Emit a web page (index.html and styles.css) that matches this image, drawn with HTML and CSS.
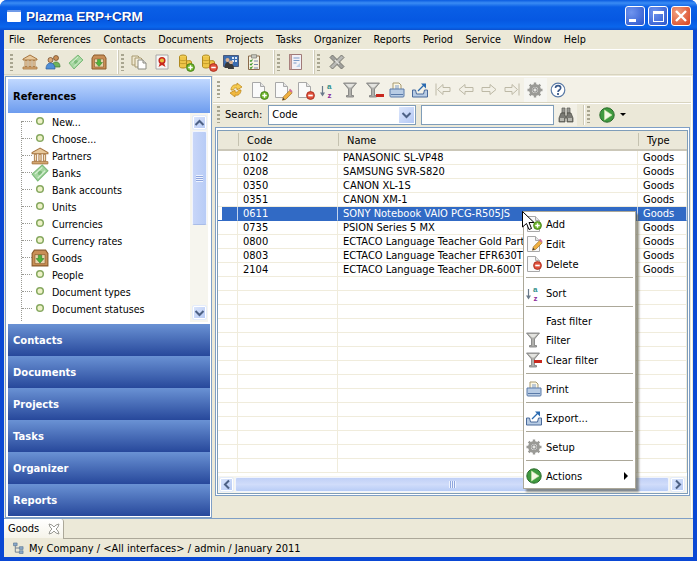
FILE: index.html
```html
<!DOCTYPE html>
<html lang="en">
<head>
    <meta charset="UTF-8">
    <title>Plazma ERP+CRM</title>
    <link rel="stylesheet" href="styles.css">
</head>
<body>
<svg class="defs" width="0" height="0">
    <symbol id="bullet" viewBox="0 0 16 16"><circle cx="8" cy="8" r="3.300" fill="#eef2c8" stroke="#86a860" stroke-width="1.500"/></symbol>
    <symbol id="bank" viewBox="0 0 16 16"><path d="M8 1 1 5v1h14V5z" fill="#e8c89a" stroke="#a5743f"/><path d="M3 6.500h2v6H3zM7 6.500h2v6H7zM11 6.500h2v6h-2z" fill="#f3dfc0" stroke="#a5743f" stroke-width=".8"/><path d="M1 13h14v2H1z" fill="#d9ad78" stroke="#a5743f" stroke-width=".8"/></symbol>
    <symbol id="people" viewBox="0 0 16 16"><circle cx="11" cy="4" r="2.500" fill="#c98f56" stroke="#6b4423" stroke-width=".7"/><path d="M7 13c0-4 2-5 4-5s4 1 4 5z" fill="#6fb35a" stroke="#3f7a33" stroke-width=".7"/><circle cx="5.500" cy="6" r="2.500" fill="#dba877" stroke="#6b4423" stroke-width=".7"/><path d="M1 15c0-4 2-6 4.500-6S10 11 10 15z" fill="#4f8fd6" stroke="#2d5c9c" stroke-width=".7"/></symbol>
    <symbol id="money" viewBox="0 0 16 16"><path d="M1 9 10 1l5 5-9 9z" fill="#a5d6a0" stroke="#7dbb7a"/><circle cx="8" cy="8" r="2" fill="#7dbb7a"/><path d="M3.500 9 10 3M6 12.500 12.500 6" stroke="#d8f0d4" fill="none"/></symbol>
    <symbol id="goods" viewBox="0 0 16 16"><path d="M3 1h10l2 3v11H1V4z" fill="#c98f56" stroke="#8a5a2b"/><path d="M3.500 5h9v8h-9z" fill="#e8d5b0" stroke="#8a5a2b" stroke-width=".6"/><path d="M6.500 5.500h3v3h2L8 12.500 4.500 8.500h2z" fill="#4fb33a" stroke="#2f7a22" stroke-width=".5"/></symbol>
    <symbol id="copies" viewBox="0 0 16 16"><path d="M1 2h6l1 1v8H1z" fill="#efe8d0" stroke="#a89a70"/><path d="M4 4h6l1 1v8H4z" fill="#f5efdc" stroke="#a89a70"/><path d="M7 6h5l3 3v6H7z" fill="#fff" stroke="#8a8a80"/><path d="M12 6v3h3" fill="#ddd" stroke="#8a8a80"/></symbol>
    <symbol id="certificate" viewBox="0 0 16 16"><path d="M2 1h12v14H2z" fill="#f6f6f4" stroke="#a8a8a8"/><circle cx="8" cy="6.500" r="2.800" fill="#e8c040" stroke="#c8281e" stroke-width="1.500"/><path d="M6 9 4.500 13 8 11l3.500 2L10 9z" fill="#c8281e"/></symbol>
    <symbol id="coins" viewBox="0 0 16 16"><ellipse cx="6" cy="2.500" rx="3.500" ry="1.500" fill="#f6d860" stroke="#b08a20"/><path d="M2.500 2.500v10c0 2 7 2 7 0v-10" fill="#eec548" stroke="#b08a20"/><path d="M2.500 5.500c0 1.500 7 1.500 7 0M2.500 8.500c0 1.500 7 1.500 7 0" fill="none" stroke="#b08a20" stroke-width=".7"/><path d="M9.500 7c3-1 5 0 5 1v3H9.500z" fill="#eec548" stroke="#b08a20"/></symbol>
    <symbol id="plus" viewBox="0 0 16 16"><circle cx="8" cy="8" r="7" fill="#6fb52c" stroke="#3f7a14" stroke-width="1.500"/><path d="M8 4v8M4 8h8" stroke="#fff" stroke-width="2.500"/></symbol>
    <symbol id="minus" viewBox="0 0 16 16"><circle cx="8" cy="8" r="7" fill="#e0503a" stroke="#a52a1a" stroke-width="1.500"/><path d="M4 8h8" stroke="#fff" stroke-width="3"/></symbol>
    <symbol id="board" viewBox="0 0 16 16"><path d="M.5 1.500h15v11H.5z" fill="#3b6db0" stroke="#4a5a7a"/><path d="M9 3h2v2H9zM12 3h2v2h-2zM9 6h2v2H9zM12 6h2v2h-2z" fill="#dce8f6"/><circle cx="4.500" cy="6" r="2" fill="#d9b090"/><circle cx="8" cy="8.500" r="2" fill="#d9b090"/><path d="M1.500 14c0-4 1.500-6 3-6s3 2 3 6zM5 15c0-4 1.500-5 3-5s3 1 3 5z" fill="#3a3a3a"/></symbol>
    <symbol id="clipboard" viewBox="0 0 16 16"><path d="M2.500 2h11v13.500h-11z" fill="#f6f2e4" stroke="#8a6a4a"/><path d="M5.500 .7h5V4h-5z" fill="#c8c8c0" stroke="#7a7a70" stroke-width=".7"/><path d="M4 6.500l1 1 1.500-2M4 10l1 1 1.500-2M4 13.500l1 1 1.500-2" fill="none" stroke="#3f9a2a" stroke-width="1.100"/><path d="M8 7h4M8 10.500h4M8 14h4" stroke="#7a8aa8"/></symbol>
    <symbol id="notebook" viewBox="0 0 16 16"><path d="M2.500 .5h12v15h-12z" fill="#f2f0f6" stroke="#a07a78"/><path d="M2.500 .5h2v15h-2z" fill="#d8a8a0" stroke="#a07a78" stroke-width=".7"/><path d="M6.500 4h6M6.500 6.500h6M6.500 9h3" stroke="#7a9ac8"/><path d="M9 13l4-4v4z" fill="#bcd0e8"/></symbol>
    <symbol id="tools" viewBox="0 0 16 16"><path d="M1 3.500 3.500 1l11.500 11.500-2.500 2.500z" fill="#a0a09c" stroke="#76766f"/><path d="M15 3.500 12.500 1 1 12.500 3.500 15z" fill="#b8b8b4" stroke="#76766f"/><path d="M6 6l4 4" stroke="#e0e0dc" stroke-width="1.500"/></symbol>
    <symbol id="refresh" viewBox="0 0 16 16"><path d="M3 8c0-4 3-6 6-5V1l5 4-5 3V6C7 5.500 5.500 6.500 5 8z" fill="#f6cc50" stroke="#c08a20" stroke-width=".8"/><path d="M13 8c0 4-3 6-6 5v2l-5-4 5-3v2c2 .5 3.500-.5 4-2z" fill="#f0b840" stroke="#c08a20" stroke-width=".8"/></symbol>
    <symbol id="doc" viewBox="0 0 16 16"><path d="M1.500 .5h8l4 4v11h-12z" fill="#fafafa" stroke="#a8a8a8"/><path d="M9.500 .5v4h4" fill="#e4e4e4" stroke="#a8a8a8"/></symbol>
    <symbol id="pencil" viewBox="0 0 16 16"><path d="M3 15l1-4 8-8 3 3-8 8z" fill="#f0b040" stroke="#9a6a20" stroke-width=".8"/><path d="M11 2.500l1.500-1.500 3 3L14 5.500z" fill="#d06a9a"/><path d="M3 15l1-3 2 2z" fill="#444"/></symbol>
    <symbol id="filter" viewBox="0 0 16 16"><path d="M.5 1h13L8.500 7v6.500h2V15h-7v-1.500h2V7z" fill="#b0b0ac" stroke="#7a7a78" stroke-width=".8"/><path d="M2.500 2h9L8 5.500H6z" fill="#e4e4e0"/></symbol>
    <symbol id="print" viewBox="0 0 16 16"><path d="M4 1h6l2 2v6H4z" fill="#fdf8e4" stroke="#a89a70"/><path d="M6 4h4M6 6h4" stroke="#7a9ac8"/><path d="M1 7h14v7a1 1 0 0 1-1 1H2a1 1 0 0 1-1-1z" fill="#b8cce4" stroke="#5a7aa8"/><path d="M2 12.500h12" stroke="#5a7aa8"/></symbol>
    <symbol id="export" viewBox="0 0 16 16"><path d="M.5 8h3l1 4h7l1-4h3v7H.5z" fill="#b8cce4" stroke="#4a6a9a"/><path d="M6 9l6-6" stroke="#2a6ab0" stroke-width="1.300"/><path d="M9 1.500h5v5z" fill="#2a6ab0"/></symbol>
    <symbol id="first" viewBox="0 0 16 16"><path d="M1 1.500v12" stroke="#bdb9a6" fill="none"/><path d="M2.500 7.500 8 2.500v3h7v4H8v3z" fill="#f2f0e6" stroke="#bdb9a6"/></symbol>
    <symbol id="prev" viewBox="0 0 16 16"><path d="M1 7.500 7 2.500v3h8v4H7v3z" fill="#f2f0e6" stroke="#bdb9a6"/></symbol>
    <symbol id="next" viewBox="0 0 16 16"><path d="M15 7.500 9 2.500v3H1v4h8v3z" fill="#f2f0e6" stroke="#bdb9a6"/></symbol>
    <symbol id="last" viewBox="0 0 16 16"><path d="M15 1.500v12" stroke="#bdb9a6" fill="none"/><path d="M13.500 7.500 8 2.500v3H1v4h7v3z" fill="#f2f0e6" stroke="#bdb9a6"/></symbol>
    <symbol id="gear" viewBox="0 0 16 16"><path d="M8 3.500a4.500 4.500 0 1 0 0 9 4.500 4.500 0 0 0 0-9z" fill="none" stroke="#9a9a96" stroke-width="3"/><path d="M8 .5v15M.5 8h15M2.700 2.700l10.600 10.600M13.300 2.700 2.700 13.300" stroke="#9a9a96" stroke-width="2.400" stroke-dasharray="3 9 3"/><circle cx="8" cy="8" r="2.200" fill="#e4e4e0" stroke="#7a7a7a"/></symbol>
    <symbol id="help" viewBox="0 0 16 16"><circle cx="8" cy="8" r="6.800" fill="#fff" stroke="#5a7aa6" stroke-width="1.200"/><path d="M5.500 6c0-3.200 5.200-3.200 5.200 0 0 2-2.700 2-2.700 4" fill="none" stroke="#3a5a8a" stroke-width="1.600"/><path d="M7.100 11h1.800v2H7.100z" fill="#3a5a8a"/></symbol>
    <symbol id="binoculars" viewBox="0 0 16 16"><path d="M4 1h3v5H4zM9 1h3v5H9z" fill="#9a9a94" stroke="#5a5a54" stroke-width=".7"/><path d="M3 6h4v3h2V6h4l2 5v4H9v-4H7v4H1v-4z" fill="#7a7a74" stroke="#4a4a44" stroke-width=".7"/><path d="M2 11h4v3H2zM10 11h4v3h-4z" fill="#b8b8b0"/></symbol>
    <symbol id="play" viewBox="0 0 16 16"><circle cx="8" cy="8" r="7.200" fill="#3f9a3f" stroke="#2a6a2a"/><path d="M5.500 3v10L13 8z" fill="#f4f8e4" stroke="#cfe8a8" stroke-width=".6"/></symbol>
    <symbol id="tabclose" viewBox="0 0 12 12"><path d="M1 1l3 1 2 2 2-2 3-1-1 3-2 2 2 2 1 3-3-1-2-2-2 2-3 1 1-3 2-2-2-2z" fill="#fff" stroke="#9a9a94"/></symbol>
    <symbol id="hierarchy" viewBox="0 0 12 12"><path d="M2.500 3v7.500H7M2.500 6H7" fill="none" stroke="#6a7a8a"/><path d="M.5 .5h4v3h-4zM7 4.500h4v3H7zM7 9h4v3H7z" fill="#8aa8c8" stroke="#4a6a8a" stroke-width=".6"/></symbol>
</svg>

<div class="window">
    <div class="titlebar">
        <div class="app-icon"></div>
        <div class="title">Plazma ERP+CRM</div>
        <div class="win-btns">
            <div class="win-btn"><span class="glyph-min"></span></div>
            <div class="win-btn"><span class="glyph-max"></span></div>
            <div class="win-btn close">
                <svg width="14" height="14" viewBox="0 0 14 14"><path d="M2 2l10 10M12 2 2 12" stroke="#fff" stroke-width="2.400"/></svg>
            </div>
        </div>
    </div>

    <div class="client">
        <div class="menubar">
            <span>File</span><span>References</span><span>Contacts</span><span>Documents</span><span>Projects</span><span>Tasks</span><span>Organizer</span><span>Reports</span><span>Period</span><span>Service</span><span>Window</span><span>Help</span>
        </div>

        <div class="main-toolbar">
            <div class="tb-group g1">
                <i class="grip"></i>
                <b class="tb"><svg><use href="#bank"/></svg></b>
                <b class="tb"><svg><use href="#people"/></svg></b>
                <b class="tb"><svg><use href="#money"/></svg></b>
                <b class="tb"><svg><use href="#goods"/></svg></b>
            </div>
            <div class="tb-group g2">
                <i class="grip"></i>
                <b class="tb"><svg><use href="#copies"/></svg></b>
                <b class="tb"><svg><use href="#certificate"/></svg></b>
                <b class="tb stack"><svg><use href="#coins"/></svg><svg class="badge"><use href="#plus"/></svg></b>
                <b class="tb stack"><svg><use href="#coins"/></svg><svg class="badge"><use href="#minus"/></svg></b>
                <b class="tb"><svg><use href="#board"/></svg></b>
                <b class="tb"><svg><use href="#clipboard"/></svg></b>
            </div>
            <div class="tb-group g3">
                <i class="grip"></i>
                <b class="tb"><svg><use href="#notebook"/></svg></b>
            </div>
            <div class="tb-group g4">
                <i class="grip"></i>
                <b class="tb"><svg><use href="#tools"/></svg></b>
            </div>
        </div>

        <div class="workspace">
            <div class="nav-panel">
                <div class="nav-head active">References</div>
                <div class="nav-list">
                    <div class="tree">
                        <div class="tree-row"><i class="hook"></i><svg class="node small"><use href="#bullet"/></svg>New...</div>
                        <div class="tree-row"><i class="hook"></i><svg class="node small"><use href="#bullet"/></svg>Choose...</div>
                        <div class="tree-row"><i class="hook"></i><svg class="node"><use href="#bank"/></svg>Partners</div>
                        <div class="tree-row"><i class="hook"></i><svg class="node"><use href="#money"/></svg>Banks</div>
                        <div class="tree-row"><i class="hook"></i><svg class="node small"><use href="#bullet"/></svg>Bank accounts</div>
                        <div class="tree-row"><i class="hook"></i><svg class="node small"><use href="#bullet"/></svg>Units</div>
                        <div class="tree-row"><i class="hook"></i><svg class="node small"><use href="#bullet"/></svg>Currencies</div>
                        <div class="tree-row"><i class="hook"></i><svg class="node small"><use href="#bullet"/></svg>Currency rates</div>
                        <div class="tree-row"><i class="hook"></i><svg class="node"><use href="#goods"/></svg>Goods</div>
                        <div class="tree-row"><i class="hook"></i><svg class="node small"><use href="#bullet"/></svg>People</div>
                        <div class="tree-row"><i class="hook"></i><svg class="node small"><use href="#bullet"/></svg>Document types</div>
                        <div class="tree-row"><i class="hook"></i><svg class="node small"><use href="#bullet"/></svg>Document statuses</div>
                    </div>
                    <div class="vscroll">
                        <div class="sb-btn"><svg width="11" height="8" viewBox="0 0 11 8"><path d="M1.500 6 5.500 2l4 4" fill="none" stroke="#4d6185" stroke-width="2"/></svg></div>
                        <div class="sb-thumb"><span class="ridges"></span></div>
                        <div class="sb-btn"><svg width="11" height="8" viewBox="0 0 11 8"><path d="M1.500 2l4 4 4-4" fill="none" stroke="#4d6185" stroke-width="2"/></svg></div>
                    </div>
                </div>
                <div class="nav-head gap">Contacts</div>
                <div class="nav-head">Documents</div>
                <div class="nav-head">Projects</div>
                <div class="nav-head">Tasks</div>
                <div class="nav-head">Organizer</div>
                <div class="nav-head">Reports</div>
            </div>

            <div class="content">
                <div class="action-bar">
                    <i class="grip"></i>
                    <b class="ab"><svg><use href="#refresh"/></svg></b>
                    <b class="ab stack"><svg><use href="#doc"/></svg><svg class="badge"><use href="#plus"/></svg></b>
                    <b class="ab stack"><svg><use href="#doc"/></svg><svg class="badge over"><use href="#pencil"/></svg></b>
                    <b class="ab stack"><svg><use href="#doc"/></svg><svg class="badge"><use href="#minus"/></svg></b>
                    <b class="ab"><svg class="sort-ico" viewBox="0 -2 16 20"><path d="M2.500 4v9" stroke="#6a7a8a" stroke-width="1.200"/><path d="M0 10.500l2.500 4 2.500-4z" fill="#6a7a8a"/><text x="7" y="7" class="sort-a">a</text><text x="7.500" y="16" class="sort-z">z</text></svg></b>
                    <b class="ab"><svg><use href="#filter"/></svg></b>
                    <b class="ab stack"><svg><use href="#filter"/></svg><i class="red-dash"></i></b>
                    <b class="ab"><svg><use href="#print"/></svg></b>
                    <b class="ab"><svg><use href="#export"/></svg></b>
                    <b class="ab"><svg><use href="#first"/></svg></b>
                    <b class="ab"><svg><use href="#prev"/></svg></b>
                    <b class="ab"><svg><use href="#next"/></svg></b>
                    <b class="ab"><svg><use href="#last"/></svg></b>
                    <b class="ab hover"><svg><use href="#gear"/></svg></b>
                    <b class="ab"><svg><use href="#help"/></svg></b>
                </div>
                <div class="search-bar">
                    <i class="grip"></i>
                    <span class="search-label">Search:</span>
                    <div class="combo"><span class="combo-text">Code</span><span class="combo-btn"><svg width="11" height="8" viewBox="0 0 11 8"><path d="M1.500 2l4 4 4-4" fill="none" stroke="#4d6185" stroke-width="2"/></svg></span></div>
                    <div class="search-input"></div>
                    <b class="find"><svg><use href="#binoculars"/></svg></b>
                    <i class="divider"></i>
                    <i class="grip"></i>
                    <b class="run"><svg><use href="#play"/></svg></b>
                    <i class="drop-arrow"></i>
                </div>

                <div class="grid-panel">
                    <div class="grid-inner">
                        <div class="grid-view">
                            <table class="grid">
                                <colgroup><col class="c0"><col class="c1"><col class="c2"><col class="c3"></colgroup>
                                <thead><tr><th></th><th>Code</th><th>Name</th><th>Type</th></tr></thead>
                                <tbody>
                                    <tr><td></td><td>0102</td><td>PANASONIC SL-VP48</td><td>Goods</td></tr>
                                    <tr><td></td><td>0208</td><td>SAMSUNG SVR-S820</td><td>Goods</td></tr>
                                    <tr><td></td><td>0350</td><td>CANON XL-1S</td><td>Goods</td></tr>
                                    <tr><td></td><td>0351</td><td>CANON XM-1</td><td>Goods</td></tr>
                                    <tr class="selected"><td></td><td>0611</td><td>SONY Notebook VAIO PCG-R505JS</td><td>Goods</td></tr>
                                    <tr><td></td><td>0735</td><td>PSION Series 5 MX</td><td>Goods</td></tr>
                                    <tr><td></td><td>0800</td><td>ECTACO Language Teacher Gold Partner</td><td>Goods</td></tr>
                                    <tr><td></td><td>0803</td><td>ECTACO Language Teacher EFR630T</td><td>Goods</td></tr>
                                    <tr><td></td><td>2104</td><td>ECTACO Language Teacher DR-600T</td><td>Goods</td></tr>
                                    <tr><td></td><td></td><td></td><td></td></tr>
                                    <tr><td></td><td></td><td></td><td></td></tr>
                                    <tr><td></td><td></td><td></td><td></td></tr>
                                    <tr><td></td><td></td><td></td><td></td></tr>
                                    <tr><td></td><td></td><td></td><td></td></tr>
                                    <tr><td></td><td></td><td></td><td></td></tr>
                                    <tr><td></td><td></td><td></td><td></td></tr>
                                    <tr><td></td><td></td><td></td><td></td></tr>
                                    <tr><td></td><td></td><td></td><td></td></tr>
                                    <tr><td></td><td></td><td></td><td></td></tr>
                                    <tr><td></td><td></td><td></td><td></td></tr>
                                    <tr><td></td><td></td><td></td><td></td></tr>
                                    <tr><td></td><td></td><td></td><td></td></tr>
                                    <tr><td></td><td></td><td></td><td></td></tr>
                                </tbody>
                            </table>
                        </div>
                        <div class="hscroll">
                            <div class="sb-btn"><svg width="8" height="11" viewBox="0 0 8 11"><path d="M6 1.500 2 5.500l4 4" fill="none" stroke="#4d6185" stroke-width="2"/></svg></div>
                            <div class="sb-thumb wide"><span class="ridges upright"></span></div>
                            <div class="sb-btn"><svg width="8" height="11" viewBox="0 0 8 11"><path d="M2 1.500l4 4-4 4" fill="none" stroke="#4d6185" stroke-width="2"/></svg></div>
                        </div>
                    </div>
                </div>
            </div>
        </div>

        <div class="tabbar">
            <div class="tab">Goods<svg class="tab-x"><use href="#tabclose"/></svg></div>
        </div>
        <div class="statusbar">
            <svg class="status-icon"><use href="#hierarchy"/></svg>
            <span>My Company / &lt;All interfaces&gt; / admin / January 2011</span>
        </div>
    </div>

    <!-- popup over the grid -->
    <div class="popup">
        <div class="mi"><span class="mi-ico stack"><svg><use href="#doc"/></svg><svg class="badge"><use href="#plus"/></svg></span>Add</div>
        <div class="mi"><span class="mi-ico stack"><svg><use href="#doc"/></svg><svg class="badge over"><use href="#pencil"/></svg></span>Edit</div>
        <div class="mi"><span class="mi-ico stack"><svg><use href="#doc"/></svg><svg class="badge"><use href="#minus"/></svg></span>Delete</div>
        <div class="sep"></div>
        <div class="mi"><span class="mi-ico"><svg class="sort-ico" viewBox="0 -2 16 20"><path d="M2.500 4v9" stroke="#6a7a8a" stroke-width="1.200"/><path d="M0 10.500l2.500 4 2.500-4z" fill="#6a7a8a"/><text x="7" y="7" class="sort-a">a</text><text x="7.500" y="16" class="sort-z">z</text></svg></span>Sort</div>
        <div class="sep"></div>
        <div class="mi short"><span class="mi-ico"></span>Fast filter</div>
        <div class="mi"><span class="mi-ico"><svg><use href="#filter"/></svg></span>Filter</div>
        <div class="mi"><span class="mi-ico stack"><svg><use href="#filter"/></svg><i class="red-dash"></i></span>Clear filter</div>
        <div class="sep"></div>
        <div class="mi"><span class="mi-ico"><svg><use href="#print"/></svg></span>Print</div>
        <div class="sep"></div>
        <div class="mi"><span class="mi-ico"><svg><use href="#export"/></svg></span>Export...</div>
        <div class="sep"></div>
        <div class="mi"><span class="mi-ico"><svg><use href="#gear"/></svg></span>Setup</div>
        <div class="sep"></div>
        <div class="mi"><span class="mi-ico"><svg><use href="#play"/></svg></span>Actions<i class="sub-arrow"></i></div>
    </div>

    <svg class="cursor" width="14" height="21" viewBox="0 0 14 21"><path d="M.5.500v15.500l4-3.500 2.500 6 2.500-1-2.500-6h5z" fill="#fff" stroke="#000"/></svg>
</div>
</body>
</html>
```

FILE: styles.css
```css
*{
    box-sizing: border-box;
}

body{
    margin: 0;
    background-color: #fff;
    font-family: "DejaVu Sans Condensed", "DejaVu Sans", sans-serif;
    font-size: 11px;
    color: #000;
}

.defs{
    position: absolute;
}

b, i{
    font-weight: normal;
    font-style: normal;
}

.sort-a, .sort-z{
    font-family: "Liberation Sans", sans-serif;
    font-weight: 700;
    font-size: 8px;
}

.sort-a{
    fill: #2f8f8a;
}

.sort-z{
    fill: #8a2a9a;
}

.window{
    position: relative;
    width: 697px;
    height: 561px;
    overflow: hidden;
    display: flex;
    flex-direction: column;
    background-color: #0a48d4;
    border-radius: 7px 7px 0 0;
    padding: 0 4px 4px;
}

/* title bar */
.titlebar{
    height: 30px;
    flex: none;
    margin: 0 -4px;
    padding: 2px 6px 0 7px;
    display: flex;
    align-items: center;
    background: linear-gradient(#0a5be0 0, #3a8cf4 3px, #0a5fe6 7px, #0658e2 20px, #0a66ec 27px, #0a50d0 30px);
}

.app-icon{
    width: 14px;
    height: 12px;
    background-color: #fff;
    border-top: 2px solid #6f9ae8;
    border-radius: 1px;
    margin-right: 5px;
}

.title{
    flex: 1;
    color: #fff;
    font-family: "Liberation Sans", sans-serif;
    font-weight: bold;
    font-size: 13.500px;
    text-shadow: 1px 1px 0 #0a2f90;
}

.win-btns{
    display: flex;
    gap: 3px;
}

.win-btn{
    width: 20px;
    height: 20px;
    border: 1px solid #fff;
    border-radius: 3px;
    background: radial-gradient(circle at 30% 30%, #6f94ee, #2a55cc);
    display: flex;
    align-items: center;
    justify-content: center;
}

.win-btn.close{
    background: radial-gradient(circle at 30% 30%, #f0a080, #d8401e);
}

.glyph-min{
    width: 7px;
    height: 3px;
    background-color: #fff;
    margin: 9px 6px 0 0;
}

.glyph-max{
    width: 11px;
    height: 11px;
    border: 1px solid #fff;
    border-top-width: 3px;
}

/* inside of the window */
.client{
    flex: 1;
    display: flex;
    flex-direction: column;
    background-color: #ece9d8;
    min-height: 0;
}

.menubar{
    height: 20px;
    flex: none;
    display: flex;
    align-items: center;
    padding-left: 5px;
    gap: 12.500px;
    font-size: 10.700px;
    border-bottom: 1px solid #fff;
}

.main-toolbar{
    height: 25px;
    flex: none;
    display: flex;
    background-color: #ebe8d8;
    border-bottom: 1px solid #d8d4c0;
}

.tb-group{
    display: flex;
    align-items: center;
    border-right: 1px solid #fff;
    box-shadow: 1px 0 0 #cfcbb8;
}

.g1{
    width: 114px;
    padding-left: 6px;
}

.g2{
    width: 156px;
    padding-left: 3px;
}

.g3{
    width: 40px;
    padding-left: 3px;
}

.g4{
    width: 45px;
    padding-left: 3px;
    border-right: 0;
    box-shadow: none;
}

.grip{
    width: 3px;
    height: 17px;
    flex: none;
    background: repeating-linear-gradient(#a8a590 0 2px, transparent 2px 4px);
}

.tb{
    width: 23px;
    height: 23px;
    flex: none;
    display: flex;
    align-items: center;
    justify-content: center;
}

.g1 .tb:nth-of-type(1){
    margin-left: 5px;
}

.g2 .tb:nth-of-type(1), .g3 .tb:nth-of-type(1){
    margin-left: 3px;
}

.g4 .tb:nth-of-type(1){
    margin-left: 5px;
}

.tb svg, .ab svg, .find svg, .run svg, .mi-ico svg{
    width: 16px;
    height: 16px;
    display: block;
}

.ab svg.sort-ico, .mi-ico svg.sort-ico{
    height: 20px;
    margin: -2px 0;
}

.stack{
    position: relative;
}

.stack .badge, .mi-ico .badge{
    position: absolute;
    width: 9px;
    height: 9px;
    right: 1px;
    bottom: 2px;
}

.stack .badge.over{
    width: 13px;
    height: 13px;
    right: 0;
    bottom: 1px;
}

.red-dash{
    position: absolute;
    width: 8px;
    height: 3px;
    background-color: #c8281e;
    right: 1px;
    bottom: 5px;
}

/* left navigator */
.workspace{
    flex: none;
    height: 444px;
    display: flex;
    padding: 1px 0 0 1px;
    border-bottom: 1px solid #7f9fc6;
}

.nav-panel{
    width: 207px;
    height: 442px;
    flex: none;
    border: 1px solid #7f9fc6;
    background-color: #fff;
    padding: 1px 2px 1px 2px;
    display: flex;
    flex-direction: column;
}

.nav-head{
    height: 32px;
    flex: none;
    display: flex;
    align-items: center;
    padding-left: 5px;
    margin-right: -1px;
    font-family: "DejaVu Sans", sans-serif;
    font-weight: bold;
    font-size: 10px;
    color: #fff;
    background: linear-gradient(#6a92d4, #27489b);
}

.nav-head.active{
    height: 34px;
    margin-top: 1px;
    color: #000;
    background: linear-gradient(#c0d8ff, #6d9cee);
}

.nav-head.gap{
    margin-top: 2px;
}

.nav-list{
    height: 209px;
    flex: none;
    display: flex;
    padding-left: 1px;
    font-size: 10.600px;
}

.tree{
    flex: 1;
    margin-left: 12px;
    border-left: 1px dotted #9a9a94;
    margin-top: 8px;
    margin-bottom: 1px;
}

.tree-row{
    height: 17px;
    display: flex;
    align-items: center;
}

.tree-row:first-child{
    margin-top: -8px;
}

.hook{
    width: 10px;
    flex: none;
    border-top: 1px dotted #9a9a94;
}

.node{
    width: 18px;
    height: 18px;
    flex: none;
    margin-right: 3px;
    margin-left: -1px;
}

.node.small{
    width: 16px;
    height: 16px;
    margin: -2px 4px 0 0;
}

/* scroll bars */
.vscroll{
    width: 18px;
    flex: none;
    margin-right: 1px;
    background-color: #f6f5ee;
    display: flex;
    flex-direction: column;
    align-items: flex-start;
    padding: 2px 0 2px 2px;
    gap: 1px;
}

.sb-btn{
    width: 15px;
    height: 15px;
    flex: none;
    border: 1px solid #e4ecfb;
    border-radius: 2px;
    background: linear-gradient(135deg, #dde7fc, #b4c8f4);
    box-shadow: 0 0 0 1px #fff inset;
    display: flex;
    align-items: center;
    justify-content: center;
}

.sb-thumb{
    width: 15px;
    height: 94px;
    flex: none;
    border: 1px solid #f0f4fe;
    border-bottom-color: #a8bce8;
    border-radius: 2px;
    background: linear-gradient(90deg, #c8d6f8, #b8ccf6);
    margin-bottom: auto;
    display: flex;
    align-items: center;
    justify-content: center;
}

.ridges{
    width: 7px;
    height: 7px;
    background: repeating-linear-gradient(#eef3fe 0 1px, #8fa6de 1px 2px);
}

.ridges.upright{
    background: repeating-linear-gradient(90deg, #eef3fe 0 1px, #8fa6de 1px 2px);
}

/* right side */
.content{
    width: 479px;
    flex: none;
    margin-left: 1px;
    border-right: 1px solid #fff;
    display: flex;
    flex-direction: column;
}

.action-bar{
    height: 27px;
    flex: none;
    display: flex;
    align-items: center;
    background-color: #f3f1e7;
    border-top: 1px solid #fff;
    border-bottom: 1px solid #d8d4c0;
    padding-left: 4px;
}

.ab{
    width: 23.070px;
    height: 24px;
    flex: none;
    display: flex;
    align-items: center;
    justify-content: center;
}

.grip + .ab{
    margin-left: 4px;
}

.ab.hover{
    background-color: #f6f6f2;
}

.search-bar{
    height: 22px;
    flex: none;
    display: flex;
    align-items: center;
    padding-left: 4px;
    background-color: #ebe8d8;
    border-top: 1px solid #fff;
}

.search-label{
    margin: 0 6px 0 5px;
}

.combo{
    width: 148px;
    height: 20px;
    display: flex;
    align-items: center;
    border: 1px solid #7f9db9;
    background-color: #fff;
}

.combo-text{
    flex: 1;
    padding-left: 3px;
}

.combo-btn{
    width: 15px;
    height: 16px;
    margin-right: 1px;
    background: linear-gradient(135deg, #dde7fc, #b4c8f4);
    display: flex;
    align-items: center;
    justify-content: center;
}

.search-input{
    width: 133px;
    height: 20px;
    margin-left: 5px;
    border: 1px solid #7f9db9;
    background-color: #fff;
}

.find{
    width: 23px;
    height: 22px;
    background-color: #f2f0e6;
    display: flex;
    align-items: center;
    justify-content: center;
}

.divider{
    width: 2px;
    height: 20px;
    margin: 0 2px 0 6px;
    background: linear-gradient(90deg, #cfcbb8 50%, #fff 50%);
}

.run{
    width: 16px;
    margin-left: 9px;
}

.drop-arrow{
    margin-left: 5px;
    width: 0;
    height: 0;
    border: 3px solid transparent;
    border-top: 3px solid #000;
    border-bottom: 0;
}

.grid-panel{
    width: 475px;
    height: 369px;
    margin: 2px 0 0 2px;
    flex: none;
    border: 1px solid #7f9fc6;
    background-color: #fff;
    padding: 2px 1px 1px;
}

.grid-inner{
    height: 100%;
    border: 1px solid #7f9db9;
    display: flex;
    flex-direction: column;
}

.grid-view{
    flex: 1;
    min-height: 0;
    overflow: hidden;
    background-color: #fff;
}

.grid{
    width: 469px;
    table-layout: fixed;
    border-collapse: separate;
    border-spacing: 0;
}

.c0{ width: 20px; }
.c1{ width: 100px; }
.c2{ width: 300px; }
.c3{ width: 49px; }

.grid th{
    height: 20px;
    padding: 0 0 1px 9px;
    font-weight: normal;
    text-align: left;
    background: linear-gradient(#ebe8d9 18px, #cbc7b8 18px);
}

.grid th + th{
    background:
        linear-gradient(90deg, #c5c2b0 2px, transparent 2px) -1px 2px / 100% 13px no-repeat,
        linear-gradient(#ebe8d9 18px, #cbc7b8 18px);
}

.grid td{
    height: 14px;
    padding: 0 0 0 5px;
    white-space: nowrap;
    overflow: hidden;
    line-height: 13px;
    border-right: 1px solid #f0ecdc;
    border-bottom: 1px solid #f0ecdc;
}

.selected td{
    background-color: #316ac5;
    color: #fff;
    border-right-color: #c4d4ee;
    border-bottom-color: #316ac5;
}

.selected td:first-child{
    background: linear-gradient(90deg, #fff 4px, #316ac5 4px);
}

.hscroll{
    height: 17px;
    flex: none;
    display: flex;
    align-items: center;
    gap: 1px;
    padding: 0 2px 0 1px;
    background-color: #f6f5ee;
}

.sb-thumb.wide{
    flex: 1;
    height: 15px;
    margin: 0;
    border-bottom-color: #f0f4fe;
    background: linear-gradient(#c0d0f6, #d0dcfa 50%, #b8ccf6);
}

.hscroll .sb-btn{
    width: 15px;
}

/* bottom */
.tabbar{
    height: 19px;
    flex: none;
    display: flex;
}

.tab{
    width: 60px;
    height: 19px;
    border-right: 1px solid #aca899;
    border-radius: 0 3px 0 0;
    padding-left: 4px;
    display: flex;
    align-items: center;
    gap: 9px;
    background: linear-gradient(#fff, #f6f4ea);
}

.tab-x{
    width: 12px;
    height: 12px;
}

.statusbar{
    height: 19px;
    flex: none;
    display: flex;
    align-items: center;
    gap: 5px;
    padding-left: 9px;
    border-top: 1px solid #aca899;
    border-image: linear-gradient(90deg, #ece9d8 60px, #aca899 60px) 1;
}

.status-icon{
    width: 11px;
    height: 12px;
}

/* context menu */
.popup{
    position: absolute;
    left: 523px;
    top: 211px;
    width: 113px;
    height: 278px;
    padding: 2px;
    background-color: #fff;
    border: 1px solid #aca899;
    box-shadow: 3px 3px 2px rgba(90, 88, 70, 0.6);
}

.mi{
    height: 20px;
    display: flex;
    align-items: center;
    position: relative;
}

.mi.short{
    height: 18px;
}

.mi-ico{
    width: 17px;
    height: 16px;
    margin-right: 3px;
    flex: none;
    position: relative;
}

.sep{
    height: 1px;
    margin: 3px 0 5px;
    background-color: #aca899;
}

.sub-arrow{
    position: absolute;
    right: 5px;
    top: 6px;
    border: 4px solid transparent;
    border-left: 4px solid #000;
    border-right: 0;
}

.cursor{
    position: absolute;
    left: 522px;
    top: 211px;
}
```
